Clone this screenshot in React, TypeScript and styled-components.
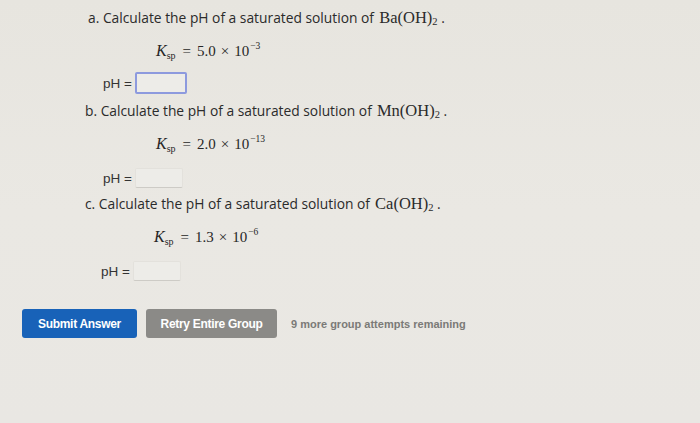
import React from 'react'
import styled, { createGlobalStyle } from 'styled-components'

const GlobalStyle = createGlobalStyle`
  html, body {
    margin: 0;
    padding: 0;
    background: #e9e7e2;
  }
`

const Page = styled.div`
  width: 700px;
  height: 423px;
  box-sizing: border-box;
  background: linear-gradient(180deg, #e7e5df 0%, #eae8e3 50%, #e9e7e3 100%);
  padding-top: 7px;
  overflow: hidden;
`

const Question = styled.section<{ indent: number; top: number }>`
  padding-left: ${p => p.indent}px;
  margin-top: ${p => p.top}px;
`

const Prompt = styled.p`
  margin: 0;
  height: 22px;
  line-height: 22px;
  font-family: 'Open Sans', sans-serif;
  font-size: 13.8px;
  font-weight: 500;
  color: #2b2b2b;
  white-space: nowrap;
`

const Formula = styled.span`
  font-family: 'Liberation Serif', serif;
  font-size: 16.5px;
  margin-left: 1px;
  sub {
    font-size: 10.5px;
    vertical-align: -2px;
  }
`

const KspLine = styled.div<{ left: number }>`
  display: flex;
  align-items: baseline;
  margin: 12px 0 0 ${p => p.left}px;
  height: 20px;
  line-height: 20px;
  font-family: 'Liberation Serif', serif;
  font-size: 15px;
  color: #262626;
  white-space: nowrap;
`

const Sym = styled.i`
  font-size: 16px;
`

const Sub = styled.span`
  font-size: 10px;
  transform: translateY(3px);
  display: inline-block;
`

const Op = styled.span<{ tight?: boolean }>`
  margin: ${p => (p.tight ? '0 5px' : '0 6px 0 7px')};
`

const Sup = styled.span`
  font-size: 9.5px;
  display: inline-block;
  transform: translateY(-7px);
  margin-left: 1px;
`

const AnswerRow = styled.div<{ left: number; top: number }>`
  display: flex;
  align-items: center;
  margin: ${p => p.top}px 0 0 ${p => p.left}px;
  height: 22px;
`

const Label = styled.span`
  font-family: 'Liberation Sans', Arial, sans-serif;
  font-size: 13.5px;
  color: #333;
  width: 32px;
  white-space: nowrap;
`

const Box = styled.div<{ active?: boolean }>`
  width: ${p => (p.active ? 52 : 48)}px;
  height: ${p => (p.active ? 22 : 20)}px;
  box-sizing: border-box;
  border: ${p => (p.active ? '2px solid #8d9ade' : '1px solid #e3e1dc')};
  border-bottom-color: ${p => (p.active ? '#8d9ade' : '#cdcbc6')};
  border-radius: 2px;
  background: #edece8;
`

const Footer = styled.div`
  display: flex;
  align-items: center;
  margin: 27px 0 0 22px;
`

const Button = styled.button<{ tone: 'primary' | 'muted' }>`
  height: 29px;
  width: ${p => (p.tone === 'primary' ? 115 : 131)}px;
  box-sizing: border-box;
  padding: 0;
  border: none;
  border-radius: 3px;
  font-family: 'Liberation Sans', Arial, sans-serif;
  font-weight: 700;
  font-size: 12px;
  letter-spacing: -0.3px;
  white-space: nowrap;
  color: #fff;
  background: ${p => (p.tone === 'primary' ? '#1862b8' : '#8b8a87')};
  margin-right: ${p => (p.tone === 'primary' ? 9 : 14)}px;
`

const Note = styled.span`
  font-family: 'Liberation Sans', Arial, sans-serif;
  font-weight: 700;
  font-size: 11px;
  color: #7b7a77;
  white-space: nowrap;
`

interface Item {
  letter: string
  metal: string
  mantissa: string
  exponent: string
  indent: number
  top: number
  kspLeft: number
  phLeft: number
  phTop: number
}

const items: Item[] = [
  { letter: 'a', metal: 'Ba', mantissa: '5.0', exponent: '−3', indent: 88, top: 0, kspLeft: 68, phLeft: 15, phTop: 11 },
  { letter: 'b', metal: 'Mn', mantissa: '2.0', exponent: '−13', indent: 85, top: 6, kspLeft: 71, phLeft: 18, phTop: 13 },
  { letter: 'c', metal: 'Ca', mantissa: '1.3', exponent: '−6', indent: 85, top: 4, kspLeft: 69, phLeft: 16, phTop: 13 }
]

const App: React.FC = () => (
  <Page>
    <GlobalStyle />
    {items.map((it, i) => (
      <Question key={it.letter} indent={it.indent} top={it.top}>
        <Prompt>
          {it.letter}. Calculate the pH of a saturated solution of
          <Formula>
            {' '}{it.metal}(OH)<sub>2</sub>
          </Formula>
          {' '}.
        </Prompt>
        <KspLine left={it.kspLeft}>
          <Sym>K</Sym>
          <Sub>sp</Sub>
          <Op>=</Op>
          {it.mantissa}
          <Op tight>×</Op>
          10
          <Sup>{it.exponent}</Sup>
        </KspLine>
        <AnswerRow left={it.phLeft} top={it.phTop}>
          <Label>pH =</Label>
          <Box active={i === 0} />
        </AnswerRow>
      </Question>
    ))}
    <Footer>
      <Button tone="primary">Submit Answer</Button>
      <Button tone="muted">Retry Entire Group</Button>
      <Note>9 more group attempts remaining</Note>
    </Footer>
  </Page>
)

export default App
